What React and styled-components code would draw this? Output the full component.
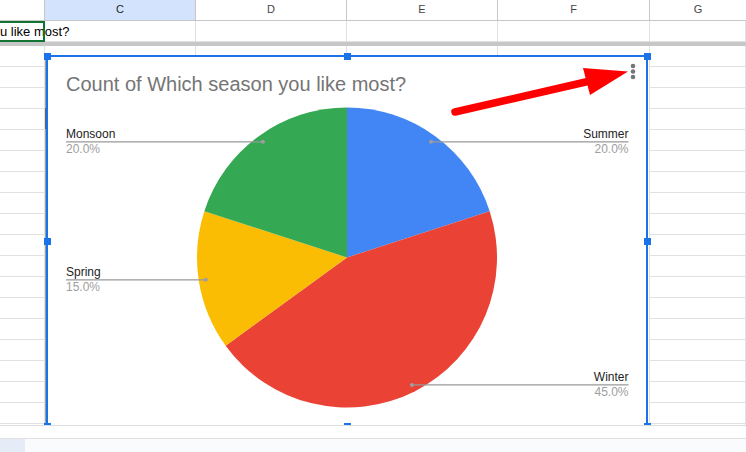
import styled, { createGlobalStyle } from 'styled-components';

const GlobalStyle = createGlobalStyle`
  html, body {
    margin: 0;
    padding: 0;
    background: #ffffff;
  }
  body {
    font-family: 'Liberation Sans', Arial, sans-serif;
  }
`;

// column widths as seen on screen (first one is the tail of column B)
const columns = [
  { key: 'B', width: 45 },
  { key: 'C', width: 151 },
  { key: 'D', width: 151 },
  { key: 'E', width: 151 },
  { key: 'F', width: 152 },
  { key: 'G', width: 96 },
];

const slices = [
  { name: 'Summer', pct: 20, color: '#4285f4', side: 'right' },
  { name: 'Winter', pct: 45, color: '#ea4335', side: 'right' },
  { name: 'Spring', pct: 15, color: '#fbbc04', side: 'left' },
  { name: 'Monsoon', pct: 20, color: '#34a853', side: 'left' },
];

const CX = 347;
const CY = 257.5;
const R = 150;
const DOT_R = 143;
const LEFT_X = 66;
const RIGHT_X = 628.5;

const point = (deg, r) => [
  CX + r * Math.sin((deg * Math.PI) / 180),
  CY - r * Math.cos((deg * Math.PI) / 180),
];

export default function App() {
  let start = 0;
  const pie = slices.map((s) => {
    const a0 = start;
    const a1 = start + (s.pct / 100) * 360;
    start = a1;
    const [x0, y0] = point(a0, R);
    const [x1, y1] = point(a1, R);
    const large = a1 - a0 > 180 ? 1 : 0;
    const [dx, dy] = point((a0 + a1) / 2, DOT_R);
    return {
      ...s,
      d: `M ${CX} ${CY} L ${x0} ${y0} A ${R} ${R} 0 ${large} 1 ${x1} ${y1} Z`,
      dx,
      dy,
    };
  });

  return (
    <>
      <GlobalStyle />
      <Sheet>
        <HeaderRow>
          {columns.map((c, i) => (
            <HeaderCell key={c.key} $width={c.width} $active={c.key === 'C'}>
              {i === 0 ? '' : c.key}
            </HeaderCell>
          ))}
        </HeaderRow>

        <FirstRow>
          {columns.map((c, i) => (
            <Cell key={c.key} $width={c.width}>
              {i === 0 && <Overflow>u like most?</Overflow>}
            </Cell>
          ))}
          <SelectedCell />
        </FirstRow>

        <FreezeBar />

        <Body>
          {Array.from({ length: 19 }).map((_, r) => (
            <Row key={r}>
              {columns.map((c) => (
                <Cell key={c.key} $width={c.width} />
              ))}
            </Row>
          ))}

          <ChartFrame>
            <svg width="604" height="372" viewBox="45 55 604 372" style={{ display: 'block' }}>
              <text x="66" y="90.5" fontSize="20" fill="#757575" fontFamily="'Liberation Sans', Arial, sans-serif">
                Count of Which season you like most?
              </text>

              {pie.map((s) => (
                <path key={s.name} d={s.d} fill={s.color} />
              ))}

              {pie.map((s) => {
                const right = s.side === 'right';
                const tx = right ? RIGHT_X : LEFT_X;
                return (
                  <g key={s.name} fontFamily="'Liberation Sans', Arial, sans-serif" fontSize="12">
                    <line
                      x1={right ? s.dx : LEFT_X}
                      x2={right ? RIGHT_X : s.dx}
                      y1={s.dy}
                      y2={s.dy}
                      stroke="#999999"
                      strokeWidth="1.2"
                    />
                    <circle cx={s.dx} cy={s.dy} r="2" fill="#9e9e9e" />
                    <text x={tx} y={s.dy - 3.8} fill="#222222" textAnchor={right ? 'end' : 'start'}>
                      {s.name}
                    </text>
                    <text x={tx} y={s.dy + 11} fill="#9e9e9e" textAnchor={right ? 'end' : 'start'}>
                      {s.pct.toFixed(1)}%
                    </text>
                  </g>
                );
              })}

              {/* red pointer arrow drawn over the screenshot */}
              <line x1="455" y1="112" x2="590" y2="81" stroke="#ff0000" strokeWidth="7.5" strokeLinecap="round" />
              <polygon points="583,68 590,95 628,71.5" fill="#ff0000" />

              <circle cx="633" cy="66" r="2.3" fill="#757575" />
              <circle cx="633" cy="71.5" r="2.3" fill="#757575" />
              <circle cx="633" cy="77" r="2.3" fill="#757575" />
            </svg>

            <Caret />
            <Selection>
              <HandleLayer>
                {[0, 1, 2].map((r) => (
                  <HandleRow key={r}>
                    <Handle />
                    {r !== 1 ? <Handle /> : <span />}
                    <Handle />
                  </HandleRow>
                ))}
              </HandleLayer>
            </Selection>
          </ChartFrame>
        </Body>

        <ScrollStrip />
        <SheetBar>
          <AddTab />
        </SheetBar>
      </Sheet>
    </>
  );
}

const Sheet = styled.div`
  width: 746px;
  height: 452px;
  overflow: hidden;
  display: flex;
  flex-direction: column;
  background: #ffffff;
`;

const HeaderRow = styled.div`
  display: flex;
  height: 21px;
  flex-shrink: 0;
  box-sizing: border-box;
  border-bottom: 1px solid #c4c7c5;
`;

const HeaderCell = styled.div`
  width: ${(p) => p.$width}px;
  flex-shrink: 0;
  box-sizing: border-box;
  border-right: 1px solid #c4c7c5;
  background: ${(p) => (p.$active ? '#d3e3fd' : '#ffffff')};
  color: ${(p) => (p.$active ? '#1f1f1f' : '#444746')};
  font-size: 11px;
  display: flex;
  align-items: center;
  justify-content: center;
  padding-bottom: 3px;

  &:last-child {
    border-right: none;
  }
`;

const FirstRow = styled.div`
  position: relative;
  display: flex;
  height: 21px;
  flex-shrink: 0;
`;

const Cell = styled.div`
  position: relative;
  width: ${(p) => p.$width}px;
  flex-shrink: 0;
  box-sizing: border-box;
  border-right: 1px solid #e1e1e1;
  border-bottom: 1px solid #e1e1e1;
`;

const Overflow = styled.span`
  position: absolute;
  left: 0;
  top: 3px;
  white-space: nowrap;
  font-size: 13px;
  color: #000000;
  z-index: 1;
`;

const SelectedCell = styled.div`
  position: absolute;
  left: -3px;
  top: 0;
  width: 48px;
  height: 21px;
  box-sizing: border-box;
  border: 2px solid #137333;
  z-index: 2;
`;

const FreezeBar = styled.div`
  height: 4px;
  flex-shrink: 0;
  background: #c7c7c7;
`;

const Body = styled.div`
  position: relative;
  height: 379px;
  flex-shrink: 0;
  overflow: hidden;
`;

const Row = styled.div`
  display: flex;
  height: 21px;
`;

const ChartFrame = styled.div`
  position: absolute;
  left: 45px;
  top: 9px;
  width: 604px;
  height: 372px;
  background: #ffffff;
  box-shadow: inset 1px 0 0 #9aa0a6;
`;

const Selection = styled.div`
  position: absolute;
  inset: 0 1px;
  border: 2px solid #1a73e8;
  pointer-events: none;
`;

const HandleLayer = styled.div`
  position: absolute;
  inset: -4.5px;
  display: flex;
  flex-direction: column;
  justify-content: space-between;
`;

const HandleRow = styled.div`
  display: flex;
  justify-content: space-between;
`;

const Handle = styled.div`
  width: 7px;
  height: 7px;
  background: #1a73e8;
`;

const Caret = styled.div`
  position: absolute;
  left: 0;
  top: 53px;
  width: 1px;
  height: 21px;
  background: #5f6368;
`;

const ScrollStrip = styled.div`
  height: 13px;
  flex-shrink: 0;
  box-sizing: border-box;
  border-top: 1px solid #dadce0;
  background: #ffffff;
`;

const SheetBar = styled.div`
  flex: 1;
  display: flex;
  box-sizing: border-box;
  border-top: 1px solid #e0e0e0;
  background: #f9fbfd;
`;

const AddTab = styled.div`
  width: 25px;
  background: #e5ecf7;
`;
